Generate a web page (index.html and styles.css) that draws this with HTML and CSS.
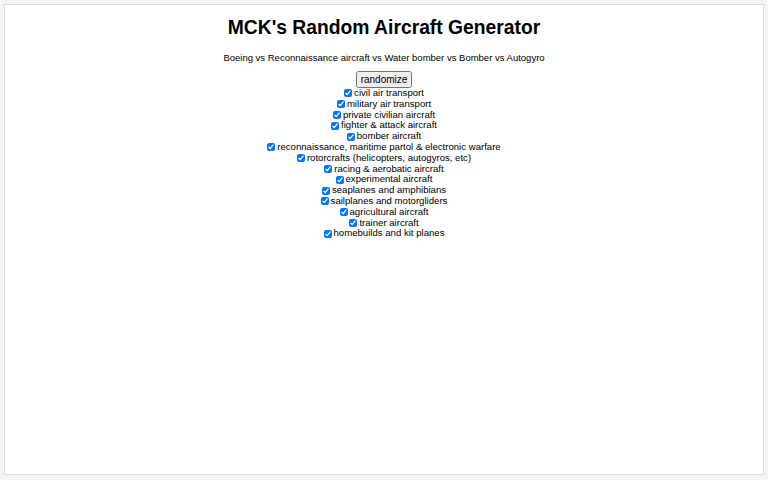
FILE: index.html
```html
<!DOCTYPE html>
<html>
<head>
<meta charset="utf-8">
<link rel="stylesheet" href="styles.css">
</head>
<body>
<div class="page">
  <h1 class="title">MCK's Random Aircraft Generator</h1>
  <p class="result">Boeing vs Reconnaissance aircraft vs Water bomber vs Bomber vs Autogyro</p>
  <button class="btn">randomize</button>
  <div class="opts">
    <label class="opt"><input type="checkbox" checked>civil air transport</label>
    <label class="opt"><input type="checkbox" checked>military air transport</label>
    <label class="opt"><input type="checkbox" checked>private civilian aircraft</label>
    <label class="opt"><input type="checkbox" checked>fighter &amp; attack aircraft</label>
    <label class="opt"><input type="checkbox" checked>bomber aircraft</label>
    <label class="opt"><input type="checkbox" checked>reconnaissance, maritime partol &amp; electronic warfare</label>
    <label class="opt"><input type="checkbox" checked>rotorcrafts (helicopters, autogyros, etc)</label>
    <label class="opt"><input type="checkbox" checked>racing &amp; aerobatic aircraft</label>
    <label class="opt"><input type="checkbox" checked>experimental aircraft</label>
    <label class="opt"><input type="checkbox" checked>seaplanes and amphibians</label>
    <label class="opt"><input type="checkbox" checked>sailplanes and motorgliders</label>
    <label class="opt"><input type="checkbox" checked>agricultural aircraft</label>
    <label class="opt"><input type="checkbox" checked>trainer aircraft</label>
    <label class="opt"><input type="checkbox" checked>homebuilds and kit planes</label>
  </div>
</div>
</body>
</html>
```
FILE: styles.css
```css
html, body {
  margin: 0;
  padding: 0;
  background: #f4f4f4;
}
body {
  padding: 4px 4px 5px 4px;
  font-family: "Liberation Sans", Arial, sans-serif;
  color: #000;
}
.page {
  background: #fff;
  border: 1px solid #dcdcdc;
  height: 471px;
  box-sizing: border-box;
  text-align: center;
  padding-top: 11px;
}
.title {
  margin: 0;
  font-size: 19.3px;
  font-weight: bold;
  line-height: 24px;
}
.result {
  margin: 12px 0 0 0;
  font-size: 9.5px;
  line-height: 12px;
}
.btn {
  margin-top: 7px;
  font-family: "Liberation Sans", Arial, sans-serif;
  font-size: 10px;
  line-height: 11px;
  padding: 1px 3px;
}
.opts {
  display: flex;
  flex-direction: column;
  align-items: center;
}
.opt {
  display: flex;
  align-items: center;
  font-size: 9.6px;
  line-height: 10.8px;
  height: 10.8px;
}
.opt input {
  width: 8px;
  height: 8px;
  margin: 0 2px 0 0;
}
```
